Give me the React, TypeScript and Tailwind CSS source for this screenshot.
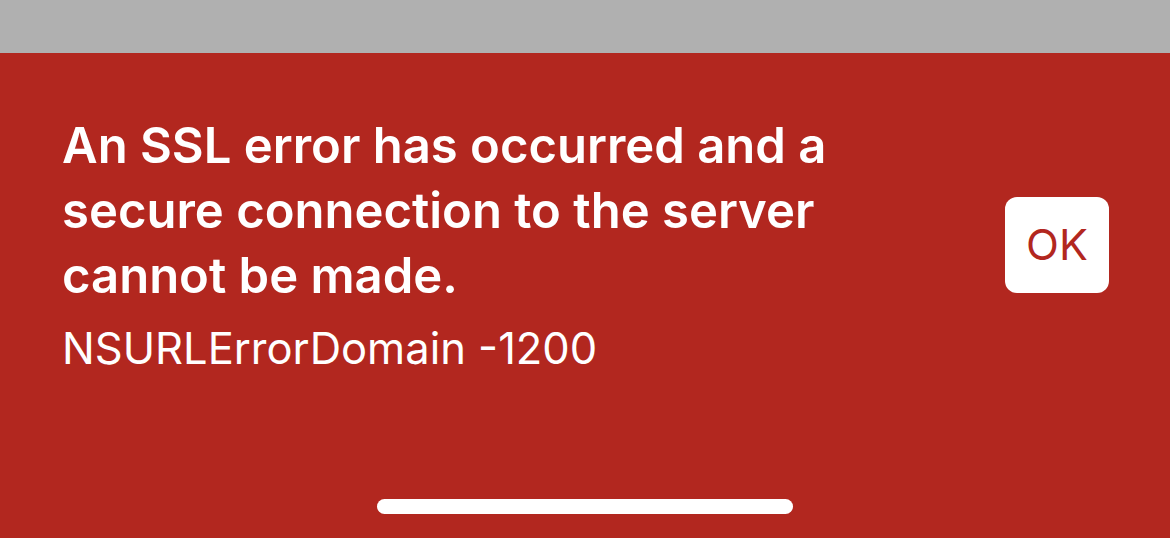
export default function App() {
  return (
    <div className="flex h-[538px] w-[1170px] flex-col overflow-hidden bg-[#b2271f] font-['Inter',sans-serif] text-white">
      <div className="h-[53px] w-full bg-[#b0b0b0]" />
      <div className="flex flex-1 flex-col">
        <div className="flex items-center pl-[62px] pr-[61px] pt-[60px]">
          <div className="flex-1">
            <p className="text-[49px] font-semibold leading-[65px]">
              An SSL error has occurred and a
              <br />
              secure connection to the server
              <br />
              cannot be made.
            </p>
            <p className="mt-[12px] text-[43.5px] leading-[56px]">NSURLErrorDomain -1200</p>
          </div>
          <button className="flex h-[96px] w-[104px] items-center justify-center rounded-[12px] bg-white text-[43px] text-[#b2271f]">
            OK
          </button>
        </div>
        <div className="mt-auto flex justify-center pb-[24px]">
          <div className="h-[15px] w-[416px] rounded-full bg-white" />
        </div>
      </div>
    </div>
  );
}
